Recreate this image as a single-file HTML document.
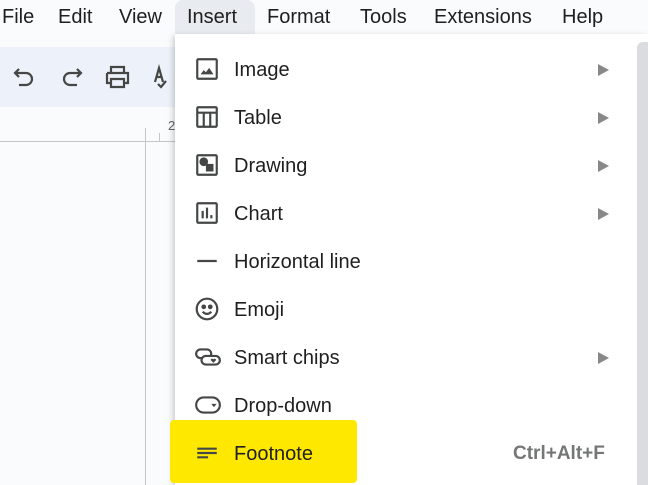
<!DOCTYPE html><html><head><style>
body{margin:0;width:648px;height:485px;overflow:hidden;background:#f9fbfd;font-family:"Liberation Sans",Arial,sans-serif;position:relative;color:#1f1f1f}
.a{position:absolute}
.mb{top:6px;font-size:20px;color:#1f1f1f}
.row{position:absolute;left:0;width:462px;height:48px}
.row svg{position:absolute;left:19px;top:11px}
.row span{position:absolute;left:59px;top:14px;font-size:20px;color:#1f1f1f}
.tri{position:absolute;left:423px;top:19px;width:0;height:0;border-left:11px solid #888;border-top:6px solid transparent;border-bottom:6px solid transparent}
</style></head><body>
<div class="a" style="left:175px;top:0;width:80px;height:36px;background:#e8ebf0;border-radius:8px 8px 0 0"></div>
<div class="a mb" style="left:2px">File</div>
<div class="a mb" style="left:58px">Edit</div>
<div class="a mb" style="left:119px">View</div>
<div class="a mb" style="left:187px">Insert</div>
<div class="a mb" style="left:267px">Format</div>
<div class="a mb" style="left:360px">Tools</div>
<div class="a mb" style="left:434px">Extensions</div>
<div class="a mb" style="left:562px">Help</div>
<div class="a" style="left:0;top:47px;width:180px;height:60px;background:#edf2fa"></div>
<svg class="a" style="left:10px;top:64px" width="160" height="28" viewBox="0 0 160 28" fill="none" stroke="#444746" stroke-width="2.2">
<path d="M6 9h10a6 6 0 0 1 0 12H9M9 5L5 9l4 4"/>
<path d="M70 9H60a6 6 0 0 0 0 12h7M67 5l4 4-4 4"/>
<path d="M101 8V3h13v5M97 9h21v10h-4M101 19h-4V9M101 15h13v8h-13z"/>
<path d="M145 18l4-14 4 14M146.5 13h5M148 20l3 3 5-6"/>
</svg>
<div class="a" style="left:0;top:141px;width:180px;height:1px;background:#c4c7c5"></div>
<div class="a" style="left:145px;top:128px;width:1px;height:357px;background:#c4c7c5"></div>
<div class="a" style="left:159px;top:133px;width:1px;height:8px;background:#c4c7c5"></div>
<div class="a" style="left:168px;top:118px;font-size:13px;color:#666">2</div>
<div class="a" style="left:175px;top:34px;width:473px;height:451px;background:#fff;box-shadow:-2px 2px 6px rgba(0,0,0,.2)">
<div class="a" style="left:462px;top:8px;width:11px;height:443px;background:#dadce0;border-radius:6px 0 0 0"></div>
<div class="a" style="left:-5px;top:386px;width:187px;height:63px;background:#ffe800;border-radius:4px"></div>
<div class="row" style="top:11px"><svg width="26" height="26" viewBox="0 0 24 24" fill="none" stroke="#444746" stroke-width="2"><rect x="3" y="3" width="18" height="18" rx="1"/><path d="M6 17l3-4 2 2 3-4 4 6z" fill="#444746" stroke="none"/></svg><span>Image</span><div class="tri"></div></div>
<div class="row" style="top:59px"><svg width="26" height="26" viewBox="0 0 24 24" fill="none" stroke="#444746" stroke-width="2"><rect x="3" y="3" width="18" height="18" rx="1"/><path d="M3 8h18M9 8v13M15 8v13"/></svg><span>Table</span><div class="tri"></div></div>
<div class="row" style="top:107px"><svg width="26" height="26" viewBox="0 0 24 24" fill="none" stroke="#444746" stroke-width="2"><rect x="3" y="3" width="18" height="18" rx="1"/><circle cx="9" cy="9" r="3" fill="#444746"/><rect x="11" y="11" width="7" height="7" fill="#444746" stroke="none"/></svg><span>Drawing</span><div class="tri"></div></div>
<div class="row" style="top:155px"><svg width="26" height="26" viewBox="0 0 24 24" fill="none" stroke="#444746" stroke-width="2"><rect x="3" y="3" width="18" height="18" rx="1"/><path d="M8 17v-7M12 17V7M16 17v-3"/></svg><span>Chart</span><div class="tri"></div></div>
<div class="row" style="top:203px"><svg width="26" height="26" viewBox="0 0 24 24" fill="none" stroke="#444746" stroke-width="2"><path d="M3 12h18"/></svg><span>Horizontal line</span></div>
<div class="row" style="top:251px"><svg width="26" height="26" viewBox="0 0 24 24" fill="none" stroke="#444746" stroke-width="2"><circle cx="12" cy="12" r="9.5"/><circle cx="9" cy="10" r="1.2" fill="#444746"/><circle cx="15" cy="10" r="1.2" fill="#444746"/><path d="M8 14.5q4 4 8 0"/></svg><span>Emoji</span></div>
<div class="row" style="top:299px"><svg width="28" height="26" viewBox="0 0 26 24" fill="none" stroke="#444746" stroke-width="2"><rect x="2" y="5" width="14" height="8" rx="4"/><rect x="7" y="11" width="17" height="8" rx="4" fill="#fff"/><path d="M16 14l2 2 2-2" fill="#444746"/></svg><span>Smart chips</span><div class="tri"></div></div>
<div class="row" style="top:347px"><svg width="28" height="26" viewBox="0 0 26 24" fill="none" stroke="#444746" stroke-width="2"><rect x="2" y="5" width="22" height="14" rx="7"/><path d="M16 11h5l-2.5 3z" fill="#444746" stroke="none"/></svg><span>Drop-down</span></div>
<div class="row" style="top:395px"><svg width="26" height="26" viewBox="0 0 24 24" fill="none" stroke="#444746" stroke-width="2"><path d="M3 8h18M3 12h18M3 16h10"/></svg><span>Footnote</span><span style="left:338px;color:#747775;font-weight:bold;font-size:19px">Ctrl+Alt+F</span></div>
</div>
</body></html>
